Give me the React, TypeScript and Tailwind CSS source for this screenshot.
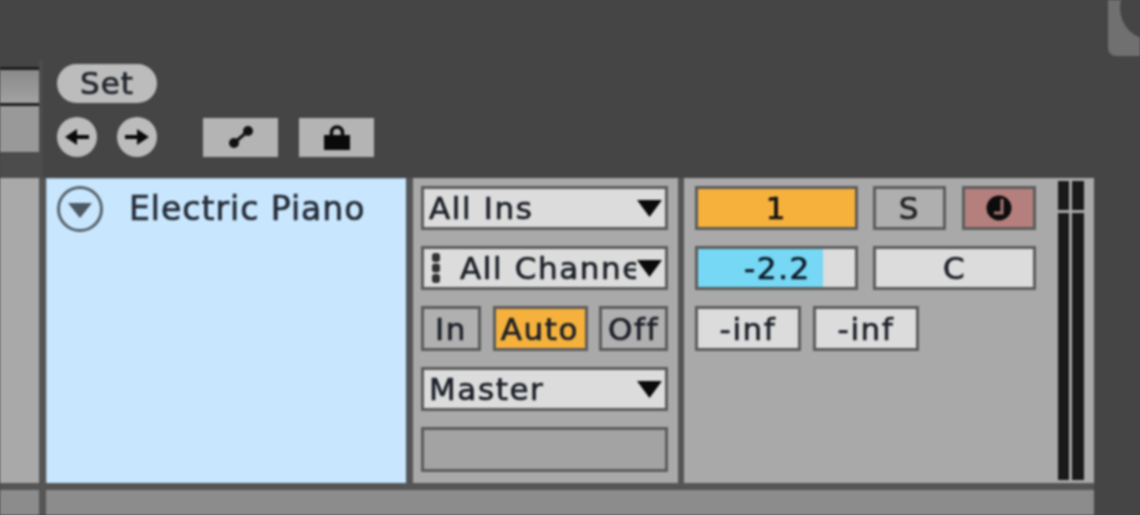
import React, { FC, ReactNode } from "react";

const font = "font-['DejaVu_Sans',sans-serif]";
const inked = "[-webkit-text-stroke:0.7px_currentColor]";

const Box: FC<{ className?: string; children?: ReactNode }> = ({ className = "", children }) => (
	<div className={`relative flex items-center border-[3px] border-[#5c5c5c] text-[31px] leading-[38px] tracking-[1.6px] text-[#1c2028] overflow-hidden ${inked} ${className}`}>
		{children}
	</div>
);

const Caret: FC = () => (
	<svg width="28" height="20" viewBox="0 0 28 20" className="shrink-0">
		<polygon points="1,2 26,2 13.5,19" fill="#0a0a0a" />
	</svg>
);

const Dropdown: FC<{ label: string; dots?: boolean }> = ({ label, dots }) => (
	<Box className="h-[44px] w-[247px] bg-[#dcdcdc] pl-[5px] pr-[1px]">
		{dots && (
			<svg width="12" height="32" viewBox="0 0 12 32" className="ml-[1px] mr-[18px] shrink-0">
				<rect x="2" y="1" width="8" height="9" rx="3" fill="#333" />
				<rect x="2" y="11.5" width="8" height="9" rx="3" fill="#333" />
				<rect x="2" y="22" width="8" height="9" rx="3" fill="#333" />
			</svg>
		)}
		<span className="min-w-0 flex-1 overflow-hidden whitespace-nowrap">{label}</span>
		<Caret />
	</Box>
);

const App: FC = () => {
	return (
		<div className={`relative h-[515px] w-[1140px] overflow-hidden bg-[#454545] ${font}`}>
			<div className="flex w-[1094px] flex-col blur-[0.9px]">
				{/* top strip */}
				<div className="flex h-[178px]">
					<div className="flex w-[39px] flex-col pt-[67px]">
						<div className="h-[3px] bg-[#1e1e1e]" />
						<div className="h-[33px] bg-gradient-to-b from-[#8a8a8a] to-[#a2a2a2]" />
						<div className="h-[3px] bg-[#1e1e1e]" />
						<div className="h-[46px] bg-[#999999]" />
						<div className="h-[26px] bg-[#4c4c4c]" />
					</div>
					<div className="mt-[60px] w-[4px] bg-[#4c4c4c]" />
					<div className="ml-[14px] flex flex-col pt-[64px]">
						<div className={`flex h-[39px] w-[100px] items-center justify-center rounded-full bg-[#bcbcbc] text-[31px] leading-none tracking-[1px] text-[#22262f] ${inked}`}>
							Set
						</div>
						<div className="mt-[14px] flex items-center">
							<div className="flex h-[40px] w-[40px] items-center justify-center rounded-full bg-[#bcbcbc]">
								<svg width="26" height="18" viewBox="0 0 26 18">
									<polygon points="1,9 13,1 13,7 25,7 25,11 13,11 13,17" fill="#0a0a0a" />
								</svg>
							</div>
							<div className="ml-[20px] flex h-[40px] w-[40px] items-center justify-center rounded-full bg-[#bcbcbc]">
								<svg width="26" height="18" viewBox="0 0 26 18">
									<polygon points="25,9 13,1 13,7 1,7 1,11 13,11 13,17" fill="#0a0a0a" />
								</svg>
							</div>
							<div className="ml-[46px] flex h-[39px] w-[75px] items-center justify-center bg-[#b4b4b4]">
								<svg width="26" height="24" viewBox="0 0 26 24">
									<line x1="6" y1="18" x2="20" y2="6" stroke="#111" strokeWidth="3" />
									<circle cx="6" cy="18" r="5" fill="#111" />
									<circle cx="20" cy="6" r="5" fill="#111" />
								</svg>
							</div>
							<div className="ml-[21px] flex h-[39px] w-[75px] items-center justify-center bg-[#b4b4b4]">
								<svg width="28" height="28" viewBox="0 0 28 28">
									<path d="M8.5 14 V9.5 a5.5 5.5 0 0 1 11 0 V14" fill="none" stroke="#0a0a0a" strokeWidth="3.5" />
									<rect x="1" y="12" width="26" height="15" fill="#0a0a0a" />
								</svg>
							</div>
						</div>
					</div>
				</div>

				{/* track row */}
				<div className="flex h-[312px] bg-[#555555] pb-[7px]">
					<div className="w-[39px] bg-[#a9a9a9]" />
					<div className="ml-[7px] flex w-[360px] items-start border-t border-l border-[#a8c4da] bg-[#c8e6fd] pl-[10px] pt-[7px]">
						<svg width="46" height="46" viewBox="0 0 46 46" className="shrink-0">
							<circle cx="23" cy="23" r="21.5" fill="none" stroke="#56626c" strokeWidth="3" />
							<polygon points="11,17 35,17 23,32" fill="#4c5862" />
						</svg>
						<span className={`ml-[26px] mt-[4px] whitespace-nowrap text-[33px] leading-[38px] tracking-[1px] text-[#262c38] ${inked}`}>
							Electric Piano
						</span>
					</div>
					<div className="ml-[7px] flex w-[265px] flex-col gap-[16px] bg-[#a9a9a9] pl-[8px] pt-[8px]">
						<Dropdown label="All Ins" />
						<Dropdown label="All Channels" dots />
						<div className="flex h-[45px] w-[247px] justify-between">
							<Box className="w-[60px] justify-center bg-[#b0b0b0]">In</Box>
							<Box className="w-[95px] justify-center bg-[#f5b13c]">Auto</Box>
							<Box className="w-[69px] justify-center bg-[#b0b0b0]">Off</Box>
						</div>
						<Dropdown label="Master" />
						<Box className="h-[45px] w-[247px] bg-[#a3a3a3]" />
					</div>
					<div className="ml-[6px] flex w-[410px] bg-[#a9a9a9] pl-[11px]">
						<div className="flex w-[341px] flex-col gap-[16px] pt-[8px]">
							<div className="flex h-[44px] justify-between">
								<Box className="w-[163px] justify-center bg-[#f5b13c] text-[#111]">1</Box>
								<div className="flex gap-[16px]">
									<Box className="w-[73px] justify-center bg-[#afafaf] text-[#222]">S</Box>
									<Box className="w-[74px] justify-center bg-[#b57f7d]">
										<svg width="26" height="26" viewBox="0 0 26 26">
											<circle cx="13" cy="13" r="12.5" fill="#0c0c0c" />
											<path d="M16 4 V18 H8" fill="none" stroke="#a87674" strokeWidth="3" />
										</svg>
									</Box>
								</div>
							</div>
							<div className="flex h-[44px] justify-between">
								<Box className="w-[163px] justify-center bg-[#dcdcdc]">
									<div className="absolute inset-y-0 left-0 w-[125px] bg-[#76d8f5]" />
									<span className="relative ml-[2px] text-[#0e1a28]">-2.2</span>
								</Box>
								<Box className="w-[163px] justify-center bg-[#dcdcdc]">C</Box>
							</div>
							<div className="flex h-[45px] gap-[12px]">
								<Box className="w-[106px] justify-center bg-[#dcdcdc]">-inf</Box>
								<Box className="w-[106px] justify-center bg-[#dcdcdc]">-inf</Box>
							</div>
						</div>
						<div className="ml-[22px] flex w-[26px] flex-col gap-[3px] py-[3px]">
							<div className="flex h-[29px] justify-between">
								<div className="w-[11px] bg-[#1a1a1a]" />
								<div className="w-[12px] bg-[#1a1a1a]" />
							</div>
							<div className="flex flex-1 justify-between">
								<div className="w-[11px] bg-[#1a1a1a]" />
								<div className="w-[12px] bg-[#1a1a1a]" />
							</div>
						</div>
					</div>
				</div>

				{/* bottom strip */}
				<div className="flex h-[25px] bg-[#555555]">
					<div className="w-[39px] bg-[#8c8c8c]" />
					<div className="ml-[7px] w-[1048px] bg-[#8c8c8c]" />
				</div>
			</div>

			{/* knob corner top right */}
			<div className="absolute right-0 top-0 h-[56px] w-[32px] overflow-hidden rounded-bl-[8px] bg-[#707070] blur-[0.9px]">
				<div className="absolute left-[12px] top-[-24px] h-[64px] w-[64px] rounded-full bg-[#454545]" />
			</div>
		</div>
	);
};

export default App;
